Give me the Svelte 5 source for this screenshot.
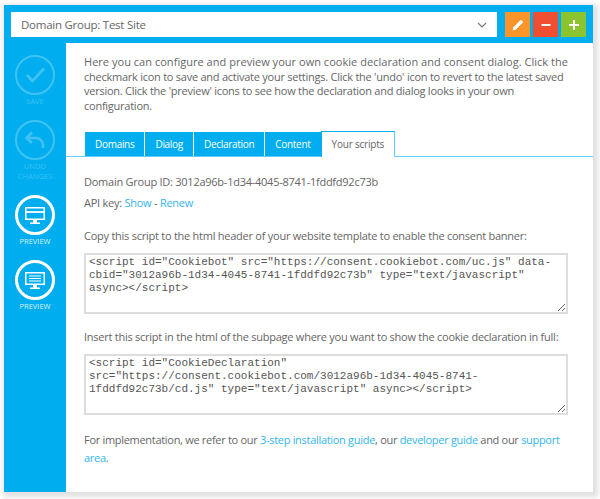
<script>
  const tabs = ['Domains', 'Dialog', 'Declaration', 'Content'];
</script>

<div class="page">
  <div class="window">
    <header class="top">
      <div class="select">
        <span>Domain Group: Test Site</span>
        <svg class="chev" width="10" height="6" viewBox="0 0 10 6"><path d="M1 1l4 4 4-4" fill="none" stroke="#777" stroke-width="1.200"/></svg>
      </div>
      <button class="act orange" aria-label="Edit">
        <svg width="14" height="14" viewBox="0 0 14 14"><path d="M1.500 12.500l.8-3.200 7-7a1 1 0 0 1 1.400 0l1 1a1 1 0 0 1 0 1.400l-7 7z" fill="#fff"/></svg>
      </button>
      <button class="act red" aria-label="Remove">
        <svg width="12" height="12" viewBox="0 0 12 12"><path d="M1.500 6h9" stroke="#fff" stroke-width="2"/></svg>
      </button>
      <button class="act green" aria-label="Add">
        <svg width="12" height="12" viewBox="0 0 12 12"><path d="M1 6h10M6 1v10" stroke="#fff" stroke-width="2"/></svg>
      </button>
    </header>

    <div class="body">
      <aside class="side">
        <div class="tool off">
          <div class="ring">
            <svg width="24" height="24" viewBox="0 0 24 24"><path d="M4 12l5.500 6L21 5.500" fill="none" stroke="#fff" stroke-width="2.600"/></svg>
          </div>
          <span>SAVE</span>
        </div>
        <div class="tool off">
          <div class="ring">
            <svg width="24" height="24" viewBox="0 0 24 24"><path d="M9 4.500L3.500 10 9 15M3.500 10H13a7 7 0 0 1 7 7v3" fill="none" stroke="#fff" stroke-width="2.600"/></svg>
          </div>
          <span>UNDO<br />CHANGES</span>
        </div>
        <div class="tool on">
          <div class="ring">
            <svg width="22" height="22" viewBox="0 0 22 22"><rect x="1.750" y="3.750" width="18.500" height="11.500" fill="none" stroke="#fff" stroke-width="1.500"/><path d="M2 8h18" stroke="#fff" stroke-width="1.800"/><path d="M9 15h4v3.500h3V20H6v-1.500h3z" fill="#fff"/></svg>
          </div>
          <span>PREVIEW</span>
        </div>
        <div class="tool on">
          <div class="ring">
            <svg width="22" height="22" viewBox="0 0 22 22"><rect x="1.750" y="3.750" width="18.500" height="11.500" fill="none" stroke="#fff" stroke-width="1.500"/><path d="M5 7h12M5 9.500h12M5 12h12" stroke="#fff" stroke-width="1.100"/><path d="M9 15h4v3.500h3V20H6v-1.500h3z" fill="#fff"/></svg>
          </div>
          <span>PREVIEW</span>
        </div>
      </aside>

      <main class="main">
        <p class="intro"><span class="lead">Here you can configure and preview your own cookie declaration and consent dialog. Click the</span> checkmark icon to save and activate your settings. Click the 'undo' icon to revert to the latest saved version. Click the 'preview' icons to see how the declaration and dialog looks in your own configuration.</p>

        <nav class="tabs">
          {#each tabs as t}
            <span class="tab">{t}</span>
          {/each}
          <span class="tab active">Your scripts</span>
        </nav>

        <section class="content">
          <p class="id">Domain Group ID: 3012a96b-1d34-4045-8741-1fddfd92c73b</p>
          <p class="api">API key: <a href="#a">Show</a> - <a href="#a">Renew</a></p>

          <p class="label first">Copy this script to the html header of your website template to enable the consent banner:</p>
          <textarea readonly>&lt;script id="Cookiebot" src="https://consent.cookiebot.com/uc.js" data-cbid="3012a96b-1d34-4045-8741-1fddfd92c73b" type="text/javascript" async&gt;&lt;/script&gt;</textarea>

          <p class="label second">Insert this script in the html of the subpage where you want to show the cookie declaration in full:</p>
          <textarea readonly>&lt;script id="CookieDeclaration" src="https://consent.cookiebot.com/3012a96b-1d34-4045-8741-1fddfd92c73b/cd.js" type="text/javascript" async&gt;&lt;/script&gt;</textarea>

          <p class="foot">For implementation, we refer to our <a href="#a">3-step installation guide</a>, our <a href="#a">developer guide</a> and our <a href="#a">support area</a>.</p>
        </section>
      </main>
    </div>
  </div>
</div>

<style>
  :global(body) {
    margin: 0;
    background: #fff;
  }
  .page {
    width: 600px;
    height: 499px;
    padding: 5px 7px 7px 4px;
    box-sizing: border-box;
    font-family: "Open Sans", sans-serif;
    color: #666;
    overflow: hidden;
    background: #fff;
  }
  .window {
    height: 487px;
    background: #00aeef;
    box-shadow: 2px 2px 5px 3px rgba(0, 0, 0, 0.12);
    display: flex;
    flex-direction: column;
  }
  .top {
    height: 38px;
    flex: none;
    box-sizing: border-box;
    padding: 7px 7px 0;
    display: flex;
    gap: 3px;
  }
  .select {
    width: 486px;
    height: 25px;
    margin-right: 5px;
    box-sizing: border-box;
    background: #fff;
    padding: 0 10px;
    display: flex;
    align-items: center;
    justify-content: space-between;
    font-size: 11.500px;
    letter-spacing: -0.25px;
    color: #666;
  }
  .act {
    width: 25px;
    height: 25px;
    border: 0;
    padding: 0;
    display: flex;
    align-items: center;
    justify-content: center;
  }
  .orange { background: #fb9429; }
  .red { background: #f04e30; }
  .green { background: #8cc42f; }
  .body {
    flex: 1;
    display: flex;
    min-height: 0;
  }
  .side {
    width: 62px;
    flex: none;
    display: flex;
    flex-direction: column;
    align-items: center;
    padding-top: 12px;
    box-sizing: border-box;
    color: #d8f2fc;
  }
  .tool {
    display: flex;
    flex-direction: column;
    align-items: center;
    padding-bottom: 14px;
    text-align: center;
    font-size: 7.500px;
    line-height: 10px;
  }
  .tool span { margin-top: 1px; }
  .ring {
    width: 40px;
    height: 40px;
    box-sizing: border-box;
    border: 3px solid #fff;
    border-radius: 50%;
    display: flex;
    align-items: center;
    justify-content: center;
  }
  .off { opacity: 0.25; }
  .off .ring { border-width: 2px; }
  .main {
    flex: 1;
    background: #fff;
    min-width: 0;
    font-size: 11px;
    letter-spacing: -0.25px;
  }
  p { margin: 0; }
  .intro {
    padding: 12px 18px 0;
    line-height: 14.600px;
    height: 76px;
  }
  .lead { letter-spacing: 0.03px; }
  .tabs {
    height: 26px;
    box-sizing: border-box;
    padding-left: 19px;
    border-bottom: 1px solid #66ccff;
    display: flex;
    gap: 1px;
    align-items: flex-end;
  }
  .tab {
    height: 24px;
    padding: 0 10px;
    background: #00aeef;
    color: #fff;
    font-size: 10px;
    letter-spacing: -0.3px;
    line-height: 24px;
  }
  .tab.active {
    height: 25px;
    margin-left: -1px;
    margin-bottom: -1px;
    background: #fff;
    color: #666;
    border: 1px solid #00aeef;
    border-bottom: 0;
    border-right-color: #66ccff;
    letter-spacing: -0.2px;
  }
  .content {
    padding: 18px 26px 0 18px;
  }
  .id, .api { line-height: 14px; }
  .api { margin-top: 7px; }
  a { color: #33b5ee; text-decoration: none; }
  .label { line-height: 14px; }
  .first { margin-top: 19px; }
  .second { margin-top: 16px; }
  textarea {
    display: block;
    box-sizing: border-box;
    width: 484px;
    height: 61px;
    margin: 10px 0 0;
    border: 2px solid #ddd;
    padding: 1px 3px;
    font-family: "Liberation Mono", monospace;
    font-size: 11px;
    line-height: 13px;
    letter-spacing: 0;
    color: #555;
    outline: 0;
  }
  .foot {
    margin-top: 16px;
    line-height: 18px;
    letter-spacing: -0.3px;
  }
</style>
